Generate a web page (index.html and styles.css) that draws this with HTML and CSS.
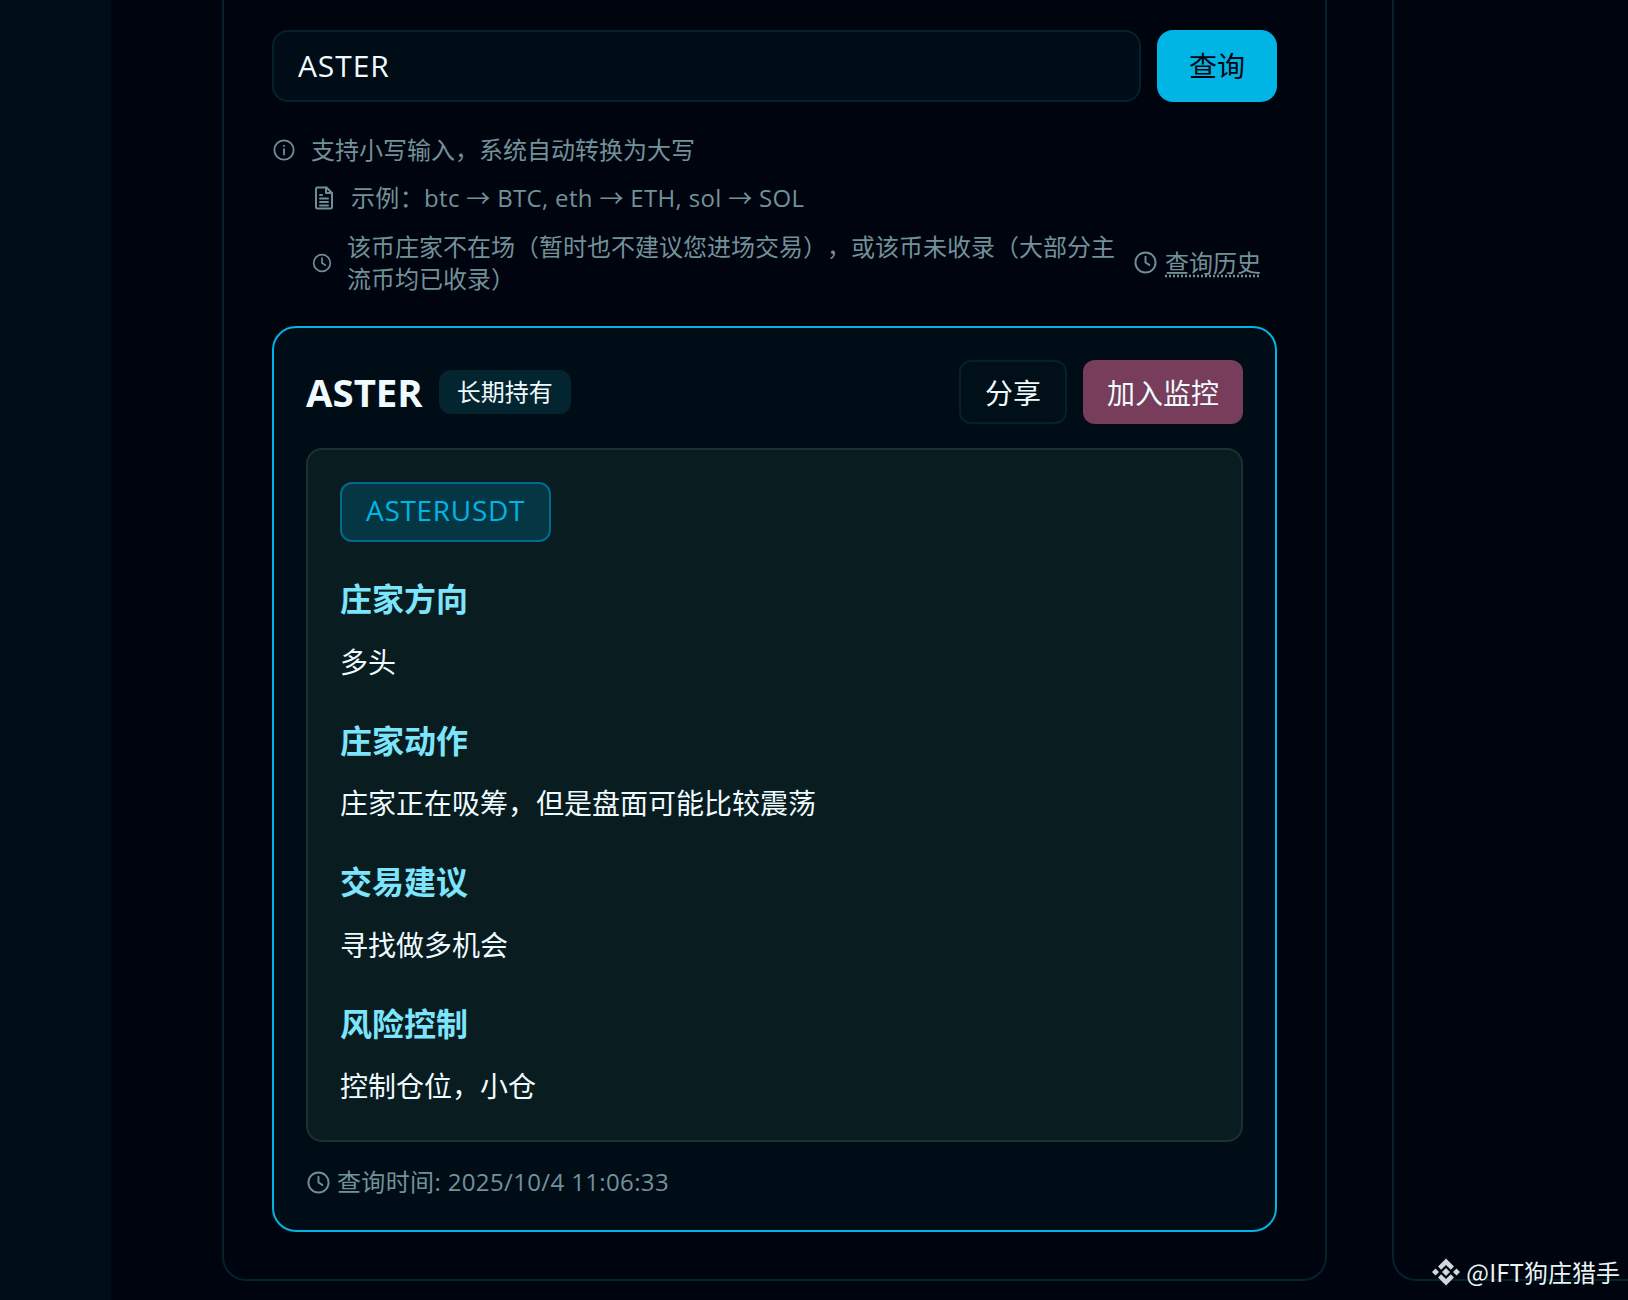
FILE: index.html
```html
<!DOCTYPE html>
<html lang="zh-CN">
<head>
<meta charset="utf-8">
<title>ASTER</title>
<link rel="stylesheet" href="styles.css">
</head>
<body>
<div class="page">
  <aside class="rail"></aside>
  <main class="card">
    <form class="search">
      <input class="search-input" type="text" value="ASTER">
      <button class="search-btn" type="button">查询</button>
    </form>
    <div class="hint hint-first">
      <svg class="ico" viewBox="0 0 24 24"><circle cx="12" cy="12" r="10.5"/><path d="M12 11v6M12 7.200v.4"/></svg>
      <span>支持小写输入，系统自动转换为大写</span>
    </div>
    <div class="hint hint-second">
      <svg class="ico ico-file" viewBox="0 0 20 24"><path d="M3.500 1.500h9L18 7v14a1.500 1.500 0 0 1-1.500 1.500h-13A1.500 1.500 0 0 1 2 21V3a1.500 1.500 0 0 1 1.500-1.500z"/><path d="M12 1.500V7h6M6 12.500h8M6 16h8M6 19.500h8M6 9h2"/></svg>
      <span>示例：btc → BTC, eth → ETH, sol → SOL</span>
    </div>
    <div class="hint-row">
      <svg class="ico ico-clock" viewBox="0 0 24 24"><circle cx="12" cy="12" r="10"/><path d="M12 6v6l4 2.500"/></svg>
      <p class="hint-long">该币庄家不在场（暂时也不建议您进场交易），或该币未收录（大部分主流币均已收录）</p>
      <a class="history">
        <svg class="ico ico-hist" viewBox="0 0 24 24"><circle cx="12" cy="12" r="10.500"/><path d="M12 6v6l4 2.500"/></svg>
        <span class="history-text">查询历史</span>
      </a>
    </div>
    <section class="result">
      <header class="result-head">
        <h2 class="result-title">ASTER</h2>
        <span class="badge">长期持有</span>
        <div class="actions">
          <button class="btn-share" type="button">分享</button>
          <button class="btn-watch" type="button">加入监控</button>
        </div>
      </header>
      <div class="panel">
        <span class="pair">ASTERUSDT</span>
        <h3 class="label">庄家方向</h3>
        <p class="value">多头</p>
        <h3 class="label">庄家动作</h3>
        <p class="value">庄家正在吸筹，但是盘面可能比较震荡</p>
        <h3 class="label">交易建议</h3>
        <p class="value">寻找做多机会</p>
        <h3 class="label">风险控制</h3>
        <p class="value">控制仓位，小仓</p>
      </div>
      <footer class="stamp">
        <svg class="ico ico-stamp" viewBox="0 0 24 24"><circle cx="12" cy="12" r="10.500"/><path d="M12 6v6l4 2.500"/></svg>
        <span>查询时间: 2025/10/4 11:06:33</span>
      </footer>
    </section>
  </main>
  <aside class="side"></aside>
</div>
<div class="watermark">
  <svg class="logo" viewBox="0 0 28 28"><path d="M14 .5l8 8-3.200 3.200L14 6.900l-4.800 4.800L6 8.500zM3.500 10.500L7 14l-3.500 3.500L0 14zM24.500 10.500L28 14l-3.500 3.500L21 14zM14 10l4 4-4 4-4-4zM9.200 16.300l4.800 4.800 4.800-4.800 3.200 3.200-8 8-8-8z"/></svg>
  <span class="mark-text">@ IFT狗庄猎手</span>
</div>
</body>
</html>
```
FILE: styles.css
```css
* { box-sizing: border-box; }
html, body { margin: 0; padding: 0; height: 1300px; overflow: hidden; }
body {
  background: #00040f;
  color: #f0fbff;
  font-family: "Open Sans", "Noto Sans CJK SC", sans-serif;
  text-spacing-trim: space-all;
}
.page { display: flex; height: 1300px; }
.rail { flex: 0 0 111px; background: #010e17; margin-right: 111px; }
.card {
  flex: 0 0 1105px;
  height: 1281px;
  border: 2px solid #04222d;
  border-top: 0;
  border-radius: 0 0 24px 24px;
  padding: 30px 48px 0;
}
.side {
  flex: 1;
  height: 1281px;
  margin-left: 65px;
  border-left: 2px solid #04222d;
  border-bottom: 2px solid #04222d;
  border-radius: 0 0 0 24px;
}
.search { display: flex; gap: 16px; height: 72px; }
.search-input {
  flex: 1;
  min-width: 0;
  background: #010d16;
  border: 2px solid #04222d;
  border-radius: 16px;
  padding: 0 24px 2px;
  color: #f0fbff;
  font: 400 30px "Open Sans", "Noto Sans CJK SC", sans-serif;
  letter-spacing: .9px;
  outline: none;
}
.search-btn {
  flex: 0 0 120px;
  border: 0;
  border-radius: 16px;
  background: #00b4e4;
  color: #00040f;
  padding: 0 0 2px;
  font: 400 28px "Open Sans", "Noto Sans CJK SC", sans-serif;
}
.ico { fill: none; stroke: #6f8f98; stroke-width: 2; stroke-linecap: round; stroke-linejoin: round; flex: none; }
.hint { display: flex; align-items: center; color: #739199; font-size: 24px; line-height: 32px; }
.hint-first { margin-top: 32px; gap: 16px; padding-left: 1px; }
.hint-first .ico { width: 22px; height: 22px; }
.hint-second { margin-top: 16px; padding-left: 42px; gap: 17px; letter-spacing: .33px; }
.ico-file { width: 20px; height: 24px; }
.hint-row { display: flex; align-items: center; margin-top: 17px; padding-left: 40px; color: #739199; font-size: 24px; line-height: 32px; }
.ico-clock { width: 20px; height: 20px; margin-right: 15px; }
.hint-long { margin: 0; width: 769px; flex: none; }
.history { display: flex; align-items: center; margin-left: 18px; gap: 8px; padding-bottom: 1px; }
.ico-hist { width: 23px; height: 23px; }
.history-text { text-decoration: underline dotted; text-underline-offset: 4px; }
.result {
  margin-top: 31px;
  height: 906px;
  border: 2px solid #00b4e4;
  border-radius: 24px;
  background: #010d16;
  padding: 32px;
}
.result-head { display: flex; align-items: center; height: 64px; }
.result-title { margin: 0; font-size: 38.4px; font-weight: 700; line-height: 48px; color: #f0fbff; }
.badge {
  margin-left: 16px;
  height: 44px;
  padding: 0 18px;
  border-radius: 12px;
  background: #032530;
  font-size: 24px;
  line-height: 44px;
}
.actions { margin-left: auto; display: flex; gap: 16px; }
.btn-share, .btn-watch {
  height: 64px;
  border-radius: 12px;
  color: #f0fbff;
  font: 400 28px "Open Sans", "Noto Sans CJK SC", sans-serif;
}
.btn-share { width: 108px; background: #010f18; border: 2px solid #04222d; }
.btn-watch { width: 160px; background: #773d5b; border: 0; }
.panel {
  margin-top: 24px;
  height: 694px;
  background: #091c20;
  border: 2px solid #1b322e;
  border-radius: 16px;
  padding: 32px;
}
.pair {
  display: inline-block;
  height: 60px;
  padding: 0 24px;
  border: 2px solid #05698a;
  border-radius: 12px;
  background: #053644;
  color: #00b4e4;
  font-size: 28px;
  line-height: 52px;
  letter-spacing: .7px;
}
.label { margin: 33px 0 16.6px; font-size: 32px; line-height: 48px; font-weight: 700; color: #7ce5fb; }
.value { margin: 0; font-size: 28px; line-height: 44px; color: #f0fbff; }
.stamp { display: flex; align-items: center; gap: 7px; margin-top: 24px; padding-left: 1px; color: #739199; font-size: 24px; line-height: 32px; letter-spacing: .36px; }
.ico-stamp { width: 23px; height: 23px; }
.watermark {
  position: absolute;
  right: 8px;
  bottom: 12px;
  display: flex;
  align-items: center;
  gap: 6px;
  color: #e8f4f6;
  font-size: 24px;
  line-height: 32px;
  font-family: "Noto Sans CJK SC", sans-serif;
}
.mark-text { word-spacing: -5px; }
.logo { width: 28px; height: 28px; fill: #cfd9dc; }
```
